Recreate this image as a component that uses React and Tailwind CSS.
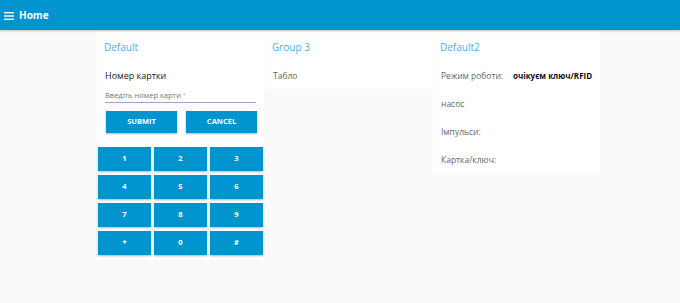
import React from 'react';

const keys = ['1', '2', '3', '4', '5', '6', '7', '8', '9', '*', '0', '#'];

function Card({ title, children, className = '' }) {
  return (
    <div className={`w-[167px] bg-white ${className}`}>
      <div className="h-[30px] flex items-center px-[7px] pt-[3px] text-[10px] text-[#4aaef0]">{title}</div>
      {children}
    </div>
  );
}

function Row({ children }) {
  return <div className="h-[28px] flex items-center px-[8px] pt-[2px] text-[8.5px] text-[#666] whitespace-nowrap">{children}</div>;
}

export default function App() {
  return (
    <div className="w-[680px] h-[303px] bg-[#fafafa] overflow-hidden" style={{ fontFamily: '"Open Sans", sans-serif' }}>
      <header className="h-[30px] bg-[#0094ce] flex items-center px-[4px] gap-[5px] shadow-[0_1px_2px_rgba(0,0,0,0.25)] relative">
        <svg width="10" height="8" viewBox="0 0 10 8" className="mt-[1px]">
          <rect x="0" y="0" width="10" height="1.4" fill="white" />
          <rect x="0" y="3.3" width="10" height="1.4" fill="white" />
          <rect x="0" y="6.6" width="10" height="1.4" fill="white" />
        </svg>
        <span className="text-white font-bold text-[10px]">Home</span>
      </header>

      <div className="flex items-start gap-[1px] pl-[97px] pt-[1px]">
        <Card title="Default" className="pb-[5px]">
          <div className="h-[28px] flex items-center px-[8px] pt-[2px] text-[9px] text-[#222]">Номер картки</div>
          <div className="px-[8px]">
            <div className="border-b border-[#9aa8c0] pb-[1px] text-[7.5px] text-[#777] leading-[12px]">
              Введіть номер карти <span className="text-[#bbb] text-[6px] align-top">*</span>
            </div>
          </div>
          <div className="flex gap-[9px] pl-[9px] pt-[8px]">
            {['SUBMIT', 'CANCEL'].map((t) => (
              <button
                key={t}
                className="w-[71px] h-[22px] bg-[#0094ce] text-white font-bold text-[7.5px] shadow-[0_1px_2px_rgba(0,0,0,0.3)]"
              >
                {t}
              </button>
            ))}
          </div>
          <div className="grid grid-cols-[53px_53px_53px] gap-x-[3px] gap-y-[4px] pl-[1px] pt-[14px]">
            {keys.map((k) => (
              <button
                key={k}
                className="h-[24px] bg-[#0094ce] text-white font-bold text-[7.5px] shadow-[0_1px_2px_rgba(0,0,0,0.3)]"
              >
                {k}
              </button>
            ))}
          </div>
        </Card>

        <Card title="Group 3" className="pb-[0px]">
          <Row>Табло</Row>
        </Card>

        <Card title="Default2" className="pb-[0px]">
          <Row>
            <span className="w-[72px] shrink-0">Режим роботи:</span>
            <span className="font-bold text-[8px] text-[#111]">очікуєм ключ/RFID</span>
          </Row>
          <Row>насос</Row>
          <Row>Імпульси:</Row>
          <Row>Картка/ключ:</Row>
        </Card>
      </div>
    </div>
  );
}
